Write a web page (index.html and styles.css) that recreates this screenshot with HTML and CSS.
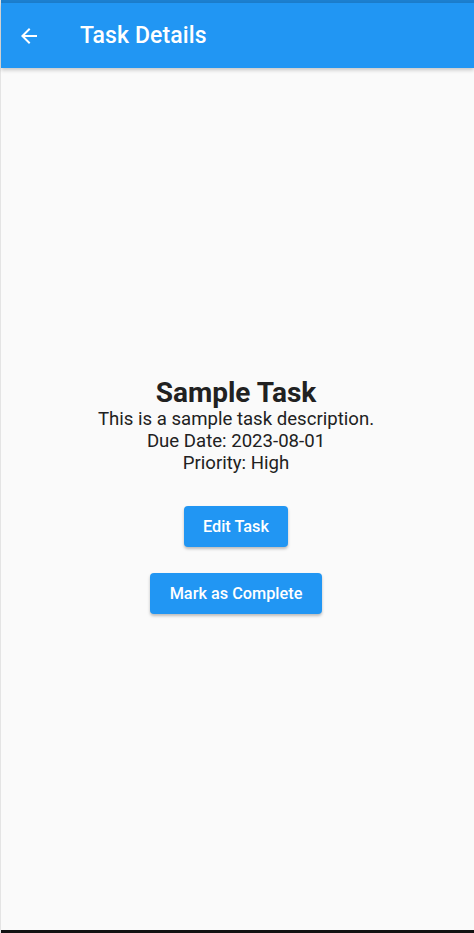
FILE: index.html
```html
<!DOCTYPE html>
<html lang="en">
<head>
<meta charset="utf-8">
<title>Task Details</title>
<link rel="stylesheet" href="styles.css">
</head>
<body>
<div class="screen">
  <div class="status-bar"></div>
  <header class="app-bar">
    <button class="back" aria-label="Back">
      <svg width="24" height="24" viewBox="0 0 24 24"><path d="M20 11H7.83l5.59-5.59L12 4l-8 8 8 8 1.41-1.41L7.83 13H20v-2z" fill="#fff"/></svg>
    </button>
    <h1 class="title">Task Details</h1>
  </header>
  <main class="content">
    <h2 class="task-name">Sample Task</h2>
    <p class="line">This is a sample task description.</p>
    <p class="line">Due Date: 2023-08-01</p>
    <p class="line">Priority: High</p>
    <button class="btn btn-first">Edit Task</button>
    <button class="btn btn-second">Mark as Complete</button>
  </main>
  <div class="nav-bar"></div>
</div>
</body>
</html>
```
FILE: styles.css
```css
* { box-sizing: border-box; }
html, body { margin: 0; padding: 0; }
body {
  font-family: Roboto, "Noto Sans", sans-serif;
  background: #fafafa;
  width: 474px;
  height: 933px;
  overflow: hidden;
}
.screen {
  display: flex;
  flex-direction: column;
  height: 933px;
  border-left: 1px solid #e4e4e4;
}
.status-bar {
  height: 3px;
  background: #1c7fcf;
}
.app-bar {
  height: 65px;
  background: #2196f3;
  display: flex;
  align-items: center;
  padding-left: 16px;
  box-shadow: 0 2px 4px rgba(0,0,0,0.22);
  position: relative;
  z-index: 1;
}
.back {
  background: none;
  border: 0;
  padding: 0;
  width: 24px;
  height: 24px;
  display: flex;
}
.title {
  margin: 0 0 0 39px;
  color: #fff;
  font-size: 23px;
  font-weight: 500;
  letter-spacing: 0.1px;
}
.content {
  flex: 1;
  display: flex;
  flex-direction: column;
  align-items: center;
  justify-content: center;
  padding: 0 3px 6px 0;
}
.task-name {
  margin: 0;
  font-size: 28px;
  font-weight: 700;
  color: #212121;
  line-height: 30px;
}
.line {
  margin: 0;
  font-size: 18.6px;
  line-height: 22px;
  color: #212121;
}
.btn {
  border: 0;
  background: #2196f3;
  color: #fff;
  font-family: Roboto, sans-serif;
  font-size: 16.3px;
  font-weight: 500;
  height: 41px;
  padding: 0 19.5px;
  border-radius: 4px;
  box-shadow: 0 2px 3px rgba(0,0,0,0.25);
}
.btn-first { margin-top: 32px; }
.btn-second { margin-top: 26px; }
.nav-bar {
  height: 3px;
  background: #111;
}
```
